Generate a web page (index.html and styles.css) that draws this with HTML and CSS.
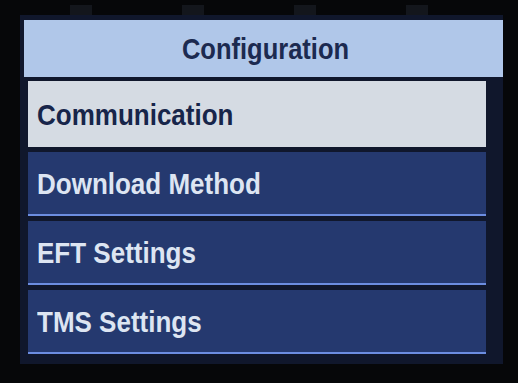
FILE: index.html
```html
<!DOCTYPE html>
<html>
<head>
<meta charset="utf-8">
<link rel="stylesheet" href="styles.css">
</head>
<body>
<div class="bezel">
  <div class="tabs">
    <span class="tab"></span><span class="tab"></span><span class="tab"></span><span class="tab"></span>
  </div>
  <div class="screen">
    <div class="header"><span class="label">Configuration</span></div>
    <div class="menu">
      <div class="item selected"><span class="label">Communication</span></div>
      <div class="item"><span class="label">Download Method</span></div>
      <div class="item"><span class="label">EFT Settings</span></div>
      <div class="item"><span class="label">TMS Settings</span></div>
    </div>
  </div>
</div>
</body>
</html>
```
FILE: styles.css
```css
html, body {
  margin: 0;
  padding: 0;
  background: #060709;
  width: 518px;
  height: 383px;
  overflow: hidden;
}
.bezel {
  width: 518px;
  height: 383px;
}
.tabs {
  display: flex;
  height: 15px;
  padding-left: 70px;
}
.tab {
  width: 30px;
  height: 10px;
  margin-top: 5px;
  margin-right: 90px;
  background: #13161c;
}
.screen {
  margin-left: 20px;
  width: 483px;
  height: 349px;
  background: #10172c;
  padding: 5px 0 0 4px;
  box-sizing: border-box;
  font-family: "Liberation Sans", Arial, sans-serif;
  font-weight: bold;
  font-size: 26px;
}
.label {
  display: inline-block;
  transform: scaleY(1.15);
}
.header {
  width: 479px;
  height: 57px;
  background: #b0c7e9;
  color: #1c2a50;
  display: flex;
  align-items: center;
  justify-content: center;
  padding: 2px 0 0 4px;
  box-sizing: border-box;
  font-size: 25.5px;
}
.menu {
  margin-top: 4px;
  margin-left: 4px;
  width: 458px;
  display: flex;
  flex-direction: column;
  gap: 5px;
}
.item {
  height: 64px;
  background: #25396f;
  color: #dde5f2;
  border-bottom: 2px solid #6c8de0;
  box-sizing: border-box;
  display: flex;
  align-items: center;
  padding: 2px 0 0 9px;
}
.item.selected {
  height: 66px;
  background: #d5dbe3;
  color: #17254a;
  border-bottom: none;
}
```
